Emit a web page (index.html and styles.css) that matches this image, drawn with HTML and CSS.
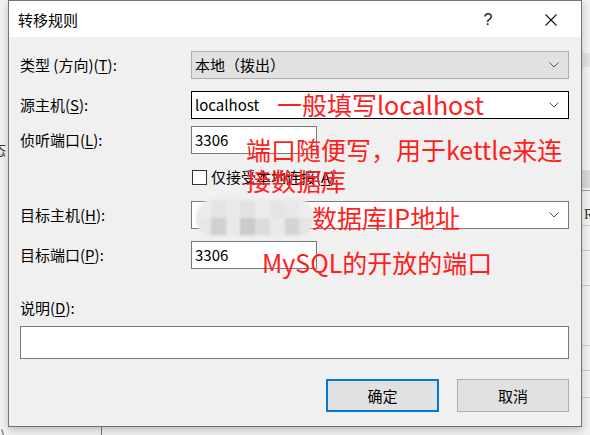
FILE: index.html
```html
<!DOCTYPE html>
<html lang="zh-CN">
<head>
<meta charset="utf-8">
<title>转移规则</title>
<link rel="stylesheet" href="styles.css">
</head>
<body>
<div class="desktop">
  <div class="bg-frag frag-left">态</div>
  <div class="bg-band band-1"></div>
  <div class="bg-band band-2"></div>
  <div class="bg-line line-a"></div>
  <div class="bg-line line-b"></div>
  <div class="bg-line line-c"></div>
  <div class="bg-line line-d"></div>
  <div class="bg-line line-e"></div>
  <div class="bg-line line-f"></div>
  <div class="bg-line line-g"></div>
  <div class="bg-frag frag-right">R)</div>
  <div class="bg-vline"></div>
  <div class="bg-frag frag-bottom">\</div>

  <div class="dialog">
    <div class="titlebar">
      <span class="title">转移规则</span>
      <span class="tb-btn help">?</span>
      <span class="tb-btn close">
        <svg width="12" height="12" viewBox="0 0 12 12"><path d="M0.5 0.5 L11.5 11.5 M11.5 0.5 L0.5 11.5" stroke="#111" stroke-width="1.1" fill="none"/></svg>
      </span>
    </div>
    <div class="body">
      <div class="row r1">
        <label class="lbl">类型 (方向)(<u>T</u>):</label>
        <div class="combo combo-gray">
          <span class="val">本地（拨出）</span>
          <svg class="chev" width="10" height="6" viewBox="0 0 10 6"><path d="M0.5 0.5 L5 5 L9.5 0.5" stroke="#555" stroke-width="1" fill="none"/></svg>
        </div>
      </div>
      <div class="row r2">
        <label class="lbl">源主机(<u>S</u>):</label>
        <div class="combo combo-focus">
          <span class="val">localhost</span>
          <svg class="chev" width="10" height="6" viewBox="0 0 10 6"><path d="M0.5 0.5 L5 5 L9.5 0.5" stroke="#555" stroke-width="1" fill="none"/></svg>
        </div>
      </div>
      <div class="row r3">
        <label class="lbl">侦听端口(<u>L</u>):</label>
        <div class="textbox short"><span class="val">3306</span></div>
      </div>
      <div class="row r4">
        <span class="lbl"></span>
        <div class="check">
          <span class="box"></span>
          <span class="check-text">仅接受本地连接(<u>A</u>)</span>
        </div>
      </div>
      <div class="row r5">
        <label class="lbl">目标主机(<u>H</u>):</label>
        <div class="combo combo-white">
          <span class="val"></span>
          <svg class="chev" width="10" height="6" viewBox="0 0 10 6"><path d="M0.5 0.5 L5 5 L9.5 0.5" stroke="#555" stroke-width="1" fill="none"/></svg>
        </div>
      </div>
      <div class="row r6">
        <label class="lbl">目标端口(<u>P</u>):</label>
        <div class="textbox short"><span class="val">3306</span></div>
      </div>
      <div class="desc-lbl">说明(<u>D</u>):</div>
      <div class="textbox desc"></div>
      <div class="buttons">
        <button class="btn btn-default">确定</button>
        <button class="btn">取消</button>
      </div>
    </div>

    <div class="mosaic">
      <span class="c c1"></span><span class="c c2"></span><span class="c c3"></span><span class="c c4"></span><span class="c c5"></span><span class="c c6"></span><span class="c c7"></span><span class="c c8"></span>
      <span class="c c9"></span><span class="c c10"></span><span class="c c11"></span><span class="c c12"></span><span class="c c13"></span><span class="c c14"></span><span class="c c15"></span><span class="c c16"></span>
    </div>

    <div class="note n1">一般填写localhost</div>
    <div class="note n2">端口随便写，用于kettle来连<br>接数据库</div>
    <div class="note n3">数据库IP地址</div>
    <div class="note n4">MySQL的开放的端口</div>
  </div>
</div>
</body>
</html>
```

FILE: styles.css
```css
* { box-sizing: border-box; }

html, body {
  margin: 0;
  padding: 0;
  width: 590px;
  height: 435px;
  overflow: hidden;
  background: #f2f2f2;
  font-family: "Noto Sans CJK SC", "Noto Sans", sans-serif;
}

.desktop {
  position: relative;
  width: 590px;
  height: 435px;
  overflow: hidden;
  background: #f2f2f2;
}

/* background window fragments */
.bg-frag {
  position: absolute;
  font-size: 15px;
  line-height: 18px;
  color: #333;
}
.frag-left { left: -9px; top: 141px; }
.frag-right { left: 584px; top: 206px; font-family: "Liberation Serif", serif; font-size: 14px; }
.frag-bottom { left: 1px; top: 428px; font-size: 12px; line-height: 12px; }

.bg-band {
  position: absolute;
  left: 582px;
  width: 8px;
  background: #e2e2e2;
}
.band-1 { top: 53px; height: 14px; }
.band-2 { top: 170px; height: 18px; background: #d8d8d8; }

.bg-line {
  position: absolute;
  left: 582px;
  width: 8px;
  height: 1px;
  background: #c8c8c8;
}
.line-a { top: 190px; background: #a0a0a0; }
.line-b { top: 225px; }
.line-c { top: 250px; }
.line-d { top: 285px; }
.line-e { top: 345px; }
.line-f { top: 370px; }
.line-g { top: 397px; }

.bg-vline {
  position: absolute;
  left: 101px;
  top: 426px;
  width: 1px;
  height: 10px;
  background: #777;
}

/* dialog */
.dialog {
  position: absolute;
  left: 8px;
  top: 0;
  width: 574px;
  height: 427px;
  background: #f0f0f0;
  border: 1px solid #737373;
  box-shadow: 0 3px 8px rgba(0, 0, 0, 0.22);
  display: flex;
  flex-direction: column;
}

.titlebar {
  height: 36px;
  background: #ffffff;
  display: flex;
  align-items: center;
  padding-left: 9px;
  flex: none;
}
.title {
  font-size: 15px;
  line-height: 20px;
  color: #000;
  flex: 1;
  margin-top: 1px;
}
.tb-btn {
  display: flex;
  align-items: center;
  justify-content: center;
  color: #111;
}
.help {
  width: 20px;
  font-family: "Liberation Sans", sans-serif;
  font-size: 16px;
  margin-right: 47px;
  margin-top: 2px;
}
.close {
  width: 12px;
  margin-right: 24px;
  margin-top: 2px;
}

.body {
  padding: 14px 12px 0 11px;
  display: flex;
  flex-direction: column;
}

.row {
  display: flex;
  align-items: center;
  height: 28px;
}
.r2 { margin-top: 12px; }
.r3 { margin-top: 7px; }
.r4 { margin-top: 15px; height: 16px; }
.r5 { margin-top: 16px; }
.r6 { margin-top: 12px; }

.lbl {
  width: 171px;
  flex: none;
  font-size: 15px;
  line-height: 20px;
  color: #000;
}
u { text-underline-offset: 2px; text-decoration-thickness: 1px; }

.combo {
  flex: 1;
  height: 28px;
  display: flex;
  align-items: center;
  padding: 0 9px 0 3px;
  border: 1px solid #7a7a7a;
  background: #fff;
}
.combo-gray { background: #e1e1e1; border-color: #adadad; }
.combo-focus { border-color: #000; }
.combo-white { border-color: #7a7a7a; }

.val {
  flex: 1;
  font-size: 15px;
  line-height: 20px;
  color: #000;
}
.chev { flex: none; }

.textbox {
  height: 28px;
  border: 1px solid #7a7a7a;
  background: #fff;
  display: flex;
  align-items: center;
  padding-left: 3px;
}
.short { width: 126px; }

.check {
  display: flex;
  align-items: center;
}
.box {
  width: 15px;
  height: 15px;
  border: 1px solid #333;
  background: #fff;
  margin-left: 1px;
  margin-right: 4px;
}
.check-text {
  font-size: 15px;
  line-height: 20px;
  color: #000;
}

.desc-lbl {
  margin-top: 29px;
  font-size: 15px;
  line-height: 20px;
  color: #000;
}
.desc {
  margin-top: 8px;
  height: 33px;
  width: 549px;
}

.buttons {
  margin-top: 20px;
  display: flex;
  justify-content: flex-end;
  gap: 18px;
}
.btn {
  width: 112px;
  height: 33px;
  background: #e1e1e1;
  border: 1px solid #adadad;
  font-family: "Noto Sans CJK SC", sans-serif;
  font-size: 15px;
  line-height: 20px;
  color: #000;
  padding: 0;
  margin: 0;
}
.btn-default {
  width: 113px;
  border: 2px solid #0078d7;
}

/* blurred mosaic over target host */
.mosaic {
  position: absolute;
  left: 187px;
  top: 197px;
  width: 118px;
  height: 40px;
  border-radius: 20px;
  overflow: hidden;
  background: #ececec;
  display: grid;
  grid-template-columns: repeat(8, 1fr);
  grid-template-rows: 1fr 1fr;
  filter: blur(1.2px);
  padding: 3px 0;
}
.c { display: block; }
.c1 { background: #ececec; }
.c2 { background: #e4e4e4; }
.c3 { background: #e9e9e9; }
.c4 { background: #e2e2e2; }
.c5 { background: #ebebeb; }
.c6 { background: #e5e5e5; }
.c7 { background: #e8e8e8; }
.c8 { background: #ededed; }
.c9 { background: #e6e6e6; }
.c10 { background: #d0d0d0; }
.c11 { background: #e8e8e8; }
.c12 { background: #cbcbcb; }
.c13 { background: #dcdcdc; }
.c14 { background: #e9e9e9; }
.c15 { background: #d4d4d4; }
.c16 { background: #e4e4e4; }

/* red annotations */
.note {
  position: absolute;
  font-family: "Noto Sans CJK SC", sans-serif;
  font-size: 25px;
  line-height: 31px;
  color: #ff1e1e;
  white-space: nowrap;
}
.n1 { left: 268px; top: 88px; }
.n2 { left: 237px; top: 133px; }
.n3 { left: 303px; top: 201px; }
.n4 { left: 253px; top: 246px; }
```
